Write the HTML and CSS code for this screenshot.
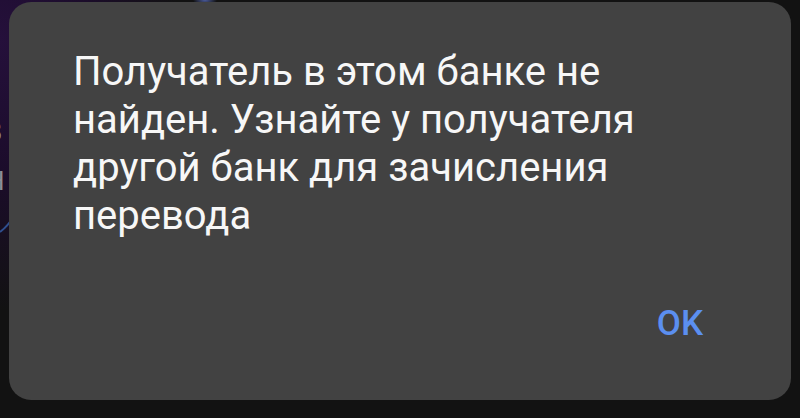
FILE: index.html
```html
<!DOCTYPE html>
<html lang="ru">
<head>
<meta charset="utf-8">
<link rel="stylesheet" href="styles.css">
</head>
<body>
<div class="backdrop">
  <span class="bg-letter bg-letter-1">В</span>
  <span class="bg-letter bg-letter-2">Н</span>
  <svg class="bg-curve" width="40" height="60" viewBox="0 0 40 60">
    <path d="M0 42 Q8 36 14 26" stroke="#2f4f8f" stroke-width="2" fill="none"/>
  </svg>
</div>
<div class="dialog">
  <p class="message">Получатель в этом банке не найден. Узнайте у получателя другой банк для зачисления перевода</p>
  <div class="actions">
    <span class="ok">OK</span>
  </div>
</div>
</body>
</html>
```
FILE: styles.css
```css
html, body {
  margin: 0;
  height: 100%;
}
body {
  position: relative;
  width: 800px;
  height: 418px;
  box-sizing: border-box;
  padding: 2px 9px 18px 9px;
  background:
    radial-gradient(ellipse 180px 270px at 0 40px, #25103b 0%, #1b0c2a 50%, rgba(20,20,20,0) 100%),
    radial-gradient(ellipse 12px 6px at 205px 0, #4a5a9a 0%, rgba(20,20,20,0) 100%),
    #121212;
  font-family: Roboto, "Noto Sans", sans-serif;
  overflow: hidden;
}
.backdrop {
  position: absolute;
  inset: 0;
}
.bg-letter {
  position: absolute;
  left: -14px;
  color: #8d8d96;
  font-size: 26px;
  line-height: 30px;
}
.bg-letter-1 { top: 117px; }
.bg-letter-2 { top: 166px; }
.bg-curve {
  position: absolute;
  left: 0;
  top: 190px;
}
.dialog {
  position: relative;
  height: 100%;
  background: #424242;
  border-radius: 22px;
  display: flex;
  flex-direction: column;
  padding: 46px 88px 56px 64px;
  box-sizing: border-box;
}
.message {
  margin: 0;
  color: #f7f7f7;
  font-size: 40px;
  line-height: 48px;
  max-width: 640px;
}
.actions {
  margin-top: auto;
  display: flex;
  justify-content: flex-end;
}
.ok {
  color: #5b8ff0;
  font-size: 35px;
  font-weight: 500;
  line-height: 40px;
}
```
